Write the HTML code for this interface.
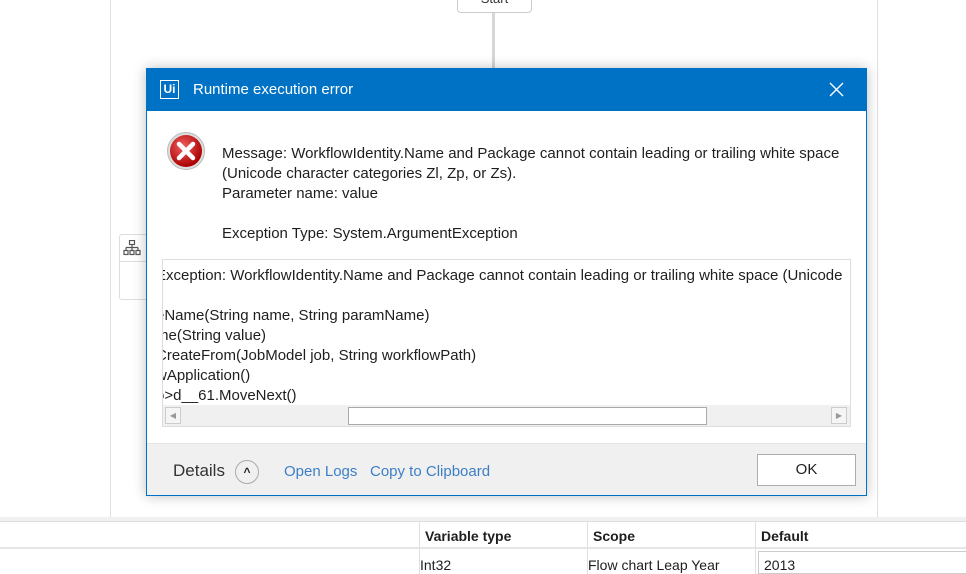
<!DOCTYPE html>
<html><head><style>
*{margin:0;padding:0;box-sizing:border-box}
body{width:966px;height:574px;overflow:hidden;background:#fff;font-family:"Liberation Sans",sans-serif;position:relative;color:#1e1e1e}
.abs{position:absolute}
</style></head><body>
<div class="abs" style="left:110px;top:0;width:1px;height:518px;background:#e0e0e0"></div>
<div class="abs" style="left:877px;top:0;width:1px;height:518px;background:#e0e0e0"></div>
<div class="abs" style="left:457px;top:-8px;width:75px;height:21px;border:1px solid #ccc;border-radius:4px;background:#fff;font-size:13px;text-align:center;line-height:12px;color:#333">Start</div>
<div class="abs" style="left:492px;top:13px;width:3px;height:56px;background:#d6d6d6"></div>
<div class="abs" style="left:119px;top:234px;width:30px;height:66px;border:1px solid #ddd;border-radius:3px;background:#fff"></div>
<div class="abs" style="left:119px;top:261px;width:30px;height:1px;background:#ddd"></div>
<svg class="abs" style="left:123px;top:240px" width="18" height="16" viewBox="0 0 18 16" fill="none" stroke="#555" stroke-width="1.2"><rect x="6.5" y="0.5" width="5" height="4"/><path d="M9 4.5V7.5M3 7.5H15M3 7.5V10.5M9 7.5V10.5M15 7.5V10.5"/><rect x="1" y="10.5" width="4" height="4"/><rect x="7" y="10.5" width="4" height="4"/><rect x="13" y="10.5" width="4" height="4"/></svg>
<!-- bottom -->
<div class="abs" style="left:0;top:517px;width:966px;height:4px;background:#f0f0f0"></div>
<div class="abs" style="left:0;top:521px;width:966px;height:28px;background:#fff;border-top:1px solid #ddd;border-bottom:2px solid #e6e6e6"></div>
<div class="abs" style="left:419px;top:521px;width:1px;height:53px;background:#e0e0e0"></div>
<div class="abs" style="left:587px;top:521px;width:1px;height:53px;background:#e0e0e0"></div>
<div class="abs" style="left:755px;top:521px;width:1px;height:53px;background:#e0e0e0"></div>
<div class="abs" style="left:425px;top:528px;font-size:14px;font-weight:bold">Variable type</div>
<div class="abs" style="left:593px;top:528px;font-size:14px;font-weight:bold">Scope</div>
<div class="abs" style="left:761px;top:528px;font-size:14px;font-weight:bold">Default</div>
<div class="abs" style="left:420px;top:557px;font-size:14px">Int32</div>
<div class="abs" style="left:588px;top:557px;font-size:14px">Flow chart Leap Year</div>
<div class="abs" style="left:758px;top:551px;width:208px;height:23px;border:1px solid #ccc;border-right:none;font-size:14px;padding:5px 0 0 5px">2013</div>
<!-- dialog -->
<div class="abs" style="left:146px;top:68px;width:721px;height:428px;border:1px solid #0072c6;background:#fff;box-shadow:0 0 12px rgba(0,0,0,.25)">
 <div style="height:42px;background:#0072c6;position:relative">
  <div class="abs" style="left:13px;top:11px;width:19px;height:19px;border:1.5px solid #fff;color:#fff;font-size:12px;font-weight:bold;line-height:16px;text-align:center">Ui</div>
  <div class="abs" style="left:46px;top:12px;color:#fff;font-size:15px">Runtime execution error</div>
  <svg class="abs" style="left:682px;top:13px" width="15" height="15" viewBox="0 0 15 15" stroke="#fff" stroke-width="1.4"><path d="M1 1L14 14M14 1L1 14"/></svg>
 </div>
 <svg class="abs" style="left:19px;top:62px" width="40" height="40" viewBox="0 0 40 40"><defs><radialGradient id="g" cx="40%" cy="35%" r="65%"><stop offset="0" stop-color="#f06060"/><stop offset="1" stop-color="#a00"/></radialGradient></defs><circle cx="20" cy="20" r="18.5" fill="#ddd" stroke="#bbb"/><circle cx="20" cy="20" r="16" fill="url(#g)"/><path d="M13 13L27 27M27 13L13 27" stroke="#fff" stroke-width="4.5" stroke-linecap="round"/></svg>
 <div class="abs" style="left:75px;top:75px;font-size:15px;line-height:20px;white-space:nowrap">Message: WorkflowIdentity.Name and Package cannot contain leading or trailing white space<br>(Unicode character categories Zl, Zp, or Zs).<br>Parameter name: value<br><br>Exception Type: System.ArgumentException</div>
 <div class="abs" style="left:15px;top:190px;width:689px;height:168px;border:1px solid #ddd;overflow:hidden">
  <div class="abs" style="left:-7px;top:6px;font-size:15px;line-height:20px;white-space:nowrap">Exception: WorkflowIdentity.Name and Package cannot contain leading or trailing white space (Unicode<br><br>eName(String name, String paramName)<br>me(String value)<br>CreateFrom(JobModel job, String workflowPath)<br>wApplication()<br>o&gt;d__61.MoveNext()</div>
  <div class="abs" style="left:0;top:145px;width:687px;height:21px;background:#f0f0f0"></div>
  <div class="abs" style="left:2px;top:147px;width:16px;height:17px;border:1px solid #ccc;background:#f5f5f5;font-size:8px;color:#999;text-align:center;line-height:15px">◀</div>
  <div class="abs" style="left:668px;top:147px;width:16px;height:17px;border:1px solid #ccc;background:#f5f5f5;font-size:8px;color:#999;text-align:center;line-height:15px">▶</div>
  <div class="abs" style="left:185px;top:147px;width:359px;height:18px;border:1px solid #aaa;background:#fff"></div>
 </div>
 <div class="abs" style="left:0;top:374px;width:719px;height:52px;background:#f0f0f0;border-top:1px solid #e4e4e4">
  <div class="abs" style="left:26px;top:17px;font-size:17px;color:#333">Details</div>
  <div class="abs" style="left:88px;top:16px;width:24px;height:24px;border:1px solid #aaa;border-radius:50%;text-align:center;font-size:12px;line-height:22px;font-weight:bold">^</div>
  <div class="abs" style="left:137px;top:19px;font-size:15px;color:#3d7fc6">Open Logs</div>
  <div class="abs" style="left:223px;top:19px;font-size:15px;color:#3d7fc6">Copy to Clipboard</div>
  <div class="abs" style="left:610px;top:10px;width:99px;height:32px;border:1px solid #adadad;background:#fff;text-align:center;font-size:15px;line-height:30px">OK</div>
 </div>
</div>
</body></html>
